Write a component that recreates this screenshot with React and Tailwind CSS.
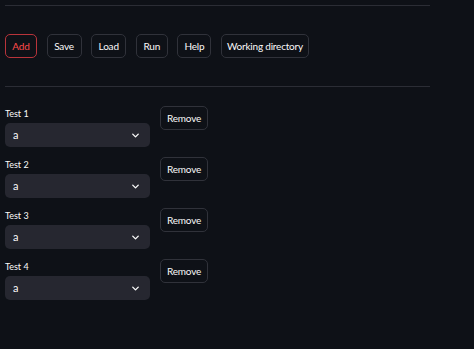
import React from "react";
import { ChevronDown } from "lucide-react";

const buttons = [
  { label: "Add", w: "w-[32px]" },
  { label: "Save", w: "w-[35px]" },
  { label: "Load", w: "w-[35px]" },
  { label: "Run", w: "w-[32px]" },
  { label: "Help", w: "w-[34px]" },
  { label: "Working directory", w: "w-[88px]" },
];
const tests = ["Test 1", "Test 2", "Test 3", "Test 4"];

const App = () => {
  return (
    <div
      className="w-[474px] h-[349px] overflow-hidden bg-[#0e1117] text-[#fafafa]"
      style={{ fontFamily: 'Lato, "Noto Sans", sans-serif' }}
    >
      <div className="w-[425px] ml-[5px] pt-[5px]">
        <div className="h-px bg-[#2b2d35]" />

        {/* toolbar */}
        <div className="flex gap-[9.6px] mt-[28px]">
          {buttons.map((b, i) => (
            <button
              key={b.label}
              className={`${b.w} h-[24px] rounded-[5px] border text-[10px] tracking-[-0.2px] leading-none whitespace-nowrap ${
                i === 0
                  ? "border-[#b8343b] text-[#ff4b4b]"
                  : "border-[#30323a] text-[#fafafa]"
              }`}
            >
              {b.label}
            </button>
          ))}
        </div>

        <div className="h-px bg-[#2b2d35] mt-[28px]" />

        {/* tests */}
        <div className="flex flex-col gap-[3px] mt-[19px]">
          {tests.map((t) => (
            <div key={t} className="flex items-start gap-[10px] h-[48px]">
              <div className="w-[145px]">
                <div className="text-[9px] leading-none mt-[3px] h-[14px]">{t}</div>
                <div className="h-[24px] rounded-[5px] bg-[#262730] flex items-center justify-between pl-[8px] pr-[9px]">
                  <span className="text-[11px]">a</span>
                  <ChevronDown size={11} strokeWidth={3} />
                </div>
              </div>
              <button className="w-[48px] h-[24px] rounded-[5px] border border-[#30323a] text-[10px] tracking-[-0.2px] leading-none">
                Remove
              </button>
            </div>
          ))}
        </div>
      </div>
    </div>
  );
};

export default App;
